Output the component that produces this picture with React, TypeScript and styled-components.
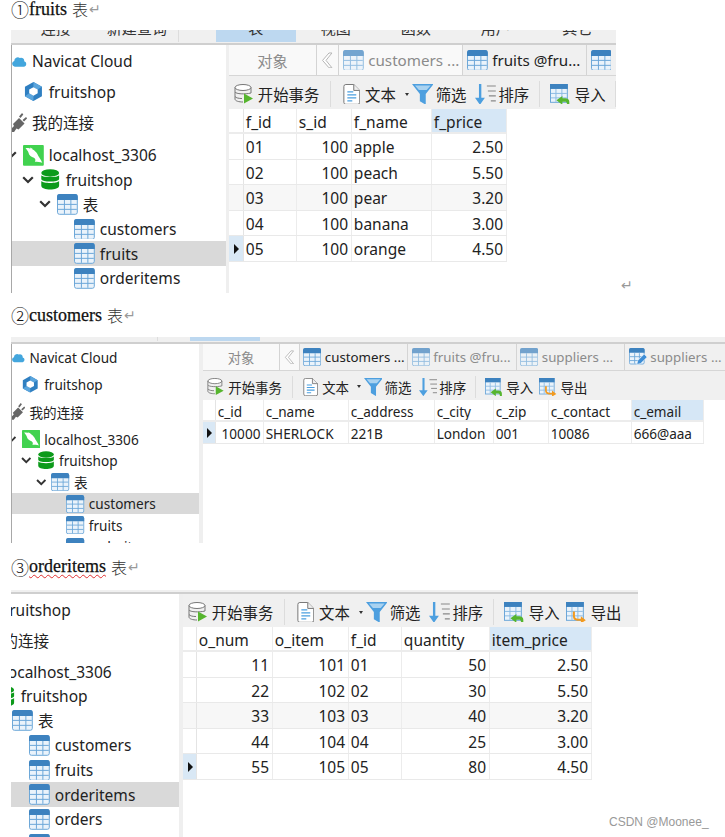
import React from 'react';
import styled, { createGlobalStyle } from 'styled-components';

const GlobalStyle = createGlobalStyle`
  html, body { margin: 0; padding: 0; background: #fff; }
  body { font-family: "Noto Sans", "Noto Sans CJK SC", sans-serif; color: #222; }
`;

const CJK = '"Noto Sans CJK SC", "Noto Sans", sans-serif';

const Page = styled.div`
  position: relative;
  width: 725px;
  height: 837px;
  overflow: hidden;
  padding-left: 11px;
  box-sizing: border-box;
`;

const Heading = styled.div<{ $h: number; $up?: number }>`
  height: ${p => p.$h}px;
  box-sizing: border-box;
  padding-bottom: ${p => p.$up ?? 0}px;
  display: flex;
  align-items: center;
  font-family: "Liberation Serif", serif;
  font-size: 18px;
  color: #111;
  -webkit-text-stroke: .25px #111;
`;
const Circled = styled.span`
  font-family: ${CJK};
  font-size: 18px;
  font-weight: 300;
  width: 18px;
  -webkit-text-stroke: 0;
`;
const HeadCjk = styled.span`
  font-family: ${CJK};
  font-weight: 300;
  font-size: 16px;
  color: #333;
  margin-left: 5px;
  -webkit-text-stroke: 0;
`;
const Squiggle = styled.span`
  text-decoration: underline wavy #e03030 1px;
  text-underline-offset: 2px;
`;
const ReturnMark = styled.span`
  font-family: "DejaVu Sans", sans-serif;
  font-size: 14px;
  color: #999;
  margin-left: 1px;
  -webkit-text-stroke: 0;
`;
const ShotRow = styled.div`
  display: flex;
  align-items: flex-end;
`;
const TrailingMark = styled(ReturnMark)`
  margin: 0 0 0 5px;
`;

const Shot = styled.section<{ $w: number; $h: number; $size: number }>`
  width: ${p => p.$w}px;
  height: ${p => p.$h}px;
  flex: none;
  font-size: ${p => p.$size}px;
  display: flex;
  flex-direction: column;
  overflow: hidden;
`;
const MenuStrip = styled.div<{ $h: number }>`
  height: ${p => p.$h}px;
  flex: none;
  display: flex;
  padding-left: .3em;
  background: #f0f0f0;
  border-bottom: 2px solid #cfcfcf;
  overflow: hidden;
`;
const MenuItem = styled.div<{ $w: number; $active?: boolean; $divide?: boolean }>`
  width: ${p => p.$w}em;
  flex: none;
  height: calc(100% - 1px);
  text-align: center;
  color: #333;
  font-family: ${CJK};
  font-size: 1em;
  background: ${p => (p.$active ? '#bdd8f0' : 'transparent')};
  box-sizing: border-box;
  ${p => p.$divide && 'border-right: 1px solid #ddd;'}
`;
const MenuLabel = styled.div`
  margin-top: -.85em;
  line-height: 1.5em;
  font-size: .94em;
`;
const Body = styled.div`
  flex: 1;
  min-height: 0;
  display: flex;
`;
const Sidebar = styled.aside<{ $w: number; $border?: boolean }>`
  width: ${p => p.$w}px;
  flex: none;
  background: #fff;
  overflow: hidden;
  ${p => p.$border && 'border-left: 1px solid #a8a8a8;'}
`;
const Gutter = styled.div<{ $w: number }>`
  width: ${p => p.$w}px;
  flex: none;
  background: #efefef;
`;
const TreeRow = styled.div<{ $tall?: boolean; $picked?: boolean; $above?: number }>`
  height: ${p => (p.$tall ? 1.94 : 1.54)}em;
  margin-top: ${p => p.$above ?? 0}em;
  display: flex;
  align-items: center;
  background: ${p => (p.$picked ? '#d9d9d9' : 'transparent')};
  overflow: hidden;
`;
const TreeInner = styled.div<{ $indent: number }>`
  margin-left: ${p => p.$indent}em;
  display: flex;
  align-items: center;
  flex: none;
`;
const IconSlot = styled.span<{ $narrow?: boolean }>`
  width: ${p => (p.$narrow ? 0.94 : 1.3)}em;
  flex: none;
  display: flex;
  justify-content: center;
`;
const TreeLabel = styled.span`
  margin-left: .32em;
  font-size: .97em;
  white-space: nowrap;
  color: #222;
`;
const Main = styled.main`
  flex: 1;
  min-width: 0;
  display: flex;
  flex-direction: column;
  background: #fff;
`;
const TabBar = styled.div`
  height: 1.94em;
  flex: none;
  display: flex;
  background: #f0f0f0;
  border-bottom: 1px solid #d6d6d6;
  box-sizing: border-box;
  overflow: hidden;
`;
const Tab = styled.div<{ $w: number; $tone: 'active' | 'pale' | 'flat' }>`
  width: ${p => p.$w}em;
  flex: none;
  display: flex;
  align-items: center;
  gap: .25em;
  padding-left: .25em;
  box-sizing: border-box;
  white-space: nowrap;
  overflow: hidden;
  font-size: 1em;
  color: ${p => (p.$tone === 'active' ? '#222' : '#8b8b8b')};
  background: ${p => (p.$tone === 'pale' ? '#f9f9f9' : '#f0f0f0')};
  border-right: 1px solid #d4d4d4;
`;
const TabText = styled.span`
  font-size: .95em;
`;
const ObjectTab = styled(Tab)`
  justify-content: center;
  padding-left: 0;
  font-family: ${CJK};
`;
const Toolbar = styled.div`
  height: 2.06em;
  flex: none;
  display: flex;
  align-items: center;
  box-sizing: border-box;
  padding: .2em 0 0 .3em;
  gap: .2em;
  background: #f0f0f0;
  white-space: nowrap;
  overflow: hidden;
`;
const Tool = styled.span<{ $gap?: number; $push?: number }>`
  display: inline-flex;
  align-items: center;
  gap: ${p => p.$gap ?? 0.25}em;
  margin-left: ${p => p.$push ?? 0}em;
  flex: none;
`;
const ToolLabel = styled.span`
  font-family: ${CJK};
  font-size: .96em;
  color: #222;
`;
const ToolSep = styled.span<{ $space: number }>`
  width: 1px;
  height: 1.6em;
  margin: 0 ${p => p.$space}em;
  background: #dcdcdc;
  flex: none;
`;
const Caret = styled.span`
  width: 0;
  height: 0;
  margin: 0 0 0 .25em;
  border-top: 3px solid #333;
  border-left: 2.5px solid transparent;
  border-right: 2.5px solid transparent;
`;
const Grid = styled.div`
  flex: none;
  align-self: flex-start;
`;
const GridRow = styled.div<{ $cols: string; $head?: boolean; $tint?: boolean }>`
  display: grid;
  grid-template-columns: ${p => p.$cols};
  height: ${p => (p.$head ? 1.56 : 1.6)}em;
  box-sizing: border-box;
  border-bottom: ${p => (p.$head ? '2px solid #ececec' : '1px solid #e9e9e9')};
  background: ${p => (p.$tint ? '#f7f7f7' : '#fff')};
`;
const Cell = styled.div<{ $right?: boolean; $lit?: boolean }>`
  padding: 1px .19em 0 .12em;
  font-size: .97em;
  line-height: 1.55em;
  white-space: nowrap;
  overflow: hidden;
  color: #222;
  text-align: ${p => (p.$right ? 'right' : 'left')};
  background: ${p => (p.$lit ? '#d6e7f6' : 'transparent')};
  border-right: 1px solid #ececec;
`;
const MarkerCell = styled.div<{ $current?: boolean }>`
  display: flex;
  align-items: center;
  padding-left: .3em;
  background: ${p => (p.$current ? '#d9e8f5' : 'transparent')};
  border-right: 1px solid #e4e4e4;
`;
const Marker = styled.span`
  width: 0;
  height: 0;
  border-left: 5px solid #111;
  border-top: 5px solid transparent;
  border-bottom: 5px solid transparent;
`;
const Watermark = styled.div`
  position: absolute;
  left: 609px;
  top: 815px;
  font-family: "Liberation Sans", sans-serif;
  font-size: 12px;
  color: #999;
`;

const Svg = styled.svg<{ $w: number; $h?: number }>`
  width: ${p => p.$w}em;
  height: ${p => p.$h ?? p.$w}em;
  flex: none;
  display: block;
`;
const ChevronSvg = styled(Svg)`
  margin-right: .38em;
`;

const TableIcon = ({ faded }: { faded?: boolean }) => (
  <Svg $w={1.3} viewBox="0 0 21 21" style={faded ? { opacity: 0.7 } : undefined}>
    <rect x=".5" y=".5" width="20" height="20" rx="2" fill="#eaf3fb" stroke="#6ba6d8" />
    <path d="M2.5 0h16A2.5 2.5 0 0 1 21 2.5V6H0V2.5A2.5 2.5 0 0 1 2.5 0z" fill="#3d82bf" />
    <path d="M7.5 6v14M14 6v14M1 10.5h19M1 15.5h19" stroke="#6ba6d8" fill="none" />
  </Svg>
);
const EditTableIcon = () => (
  <Svg $w={1.3} viewBox="0 0 21 21">
    <rect x=".5" y=".5" width="17" height="18" rx="1.5" fill="#eaf3fb" stroke="#6ba6d8" />
    <path d="M2 0h14a2 2 0 0 1 2 2v3.500H0V2a2 2 0 0 1 2-2z" fill="#3d82bf" />
    <path d="M6.500 6v12M12 6v12M1 10h16M1 14.500h16" stroke="#6ba6d8" fill="none" />
    <path d="M9 19l1-4.500 7.500-7.500 3.500 3.500-7.500 7.500z" fill="#3f8ed6" stroke="#fff" strokeWidth=".7" />
  </Svg>
);
const DbIcon = () => (
  <Svg $w={1.15} $h={1.3} viewBox="0 0 18 21">
    <ellipse cx="9" cy="4" rx="9" ry="3.800" fill="#0c9a1a" />
    <path d="M0 6.300C2 8.800 16 8.800 18 6.300V10C18 13.500 0 13.500 0 10z" fill="#0c9a1a" />
    <path d="M0 12.200C2 14.800 16 14.800 18 12.200V17C18 22 0 22 0 17z" fill="#0c9a1a" />
  </Svg>
);
const CloudIcon = () => (
  <Svg $w={.94} $h={.75} viewBox="0 0 16 12">
    <path d="M3 12A3 3 0 0 1 2.400 6.100 3.800 3.800 0 0 1 8.300 2.800 3.300 3.300 0 0 1 13 6.200 3 3 0 0 1 13 12z" fill="#43a6dd" />
  </Svg>
);
const HexIcon = () => (
  <Svg $w={1.18} viewBox="0 0 20 20">
    <path d="M10 0l9 5v10l-9 5-9-5V5z" fill="#2f7fc1" />
    <path d="M10 0l9 5-4.500 3L10 5.500z" fill="#5aa5dd" />
    <path d="M1 15l4.500-3L10 14.500V20z" fill="#5aa5dd" />
    <path d="M10 5.500l4.500 2.500v4L10 14.500 5.500 12V8z" fill="#fff" />
  </Svg>
);
const PlugIcon = () => (
  <Svg $w={.94} $h={1.2} viewBox="0 0 15 19">
    <path d="M0 19v-4l2-2-1-2 6-6 5.500 5.500-6 6-2-1-2.500 3.500z" fill="#666" />
    <path d="M7 3.500L10 0l1.300 1.300L8.500 5zM10.500 7L14 4l1 1.300-3 3.200z" fill="#666" />
  </Svg>
);
const MysqlIcon = () => (
  <Svg $w={1.3} viewBox="0 0 21 21">
    <rect width="21" height="21" rx="1" fill="#41d24f" />
    <path d="M2.500 3C7 2.500 12 4.500 14.500 9c1 2.500 3.500 5 5 9-2.500-1.200-4.500-.5-7.500-1 1-1.500.5-3-1-4-2.500-1-5-2.500-5.500-5.500C5 6 3.500 4.500 2.500 3z" fill="#fff" />
    <path d="M8 5l-1-2.500L10 4z" fill="#fff" />
  </Svg>
);
const Chevron = () => (
  <ChevronSvg $w={.75} $h={.5} viewBox="0 0 12 8">
    <path d="M1.200 1.200L6 6l4.800-4.800" fill="none" stroke="#333" strokeWidth="2.200" />
  </ChevronSvg>
);
const GreyDbIcon = () => (
  <Svg $w={1.25} $h={1.25} viewBox="0 0 20 20">
    <ellipse cx="9" cy="3.500" rx="8" ry="3" fill="#fff" stroke="#777" />
    <path d="M1 3.500V15c0 2 4 3 8 3M17 3.500V9M1 8c1 2 10 2.500 16 1M1 12.500c1 1.500 4 2 7 2" fill="none" stroke="#777" />
    <path d="M10 9.500l9 5-9 5z" fill="#56b52e" />
  </Svg>
);
const DocIcon = () => (
  <Svg $w={1.1} $h={1.3} viewBox="0 0 17 21">
    <path d="M.5 2.500a2 2 0 0 1 2-2h8l6 6v12a2 2 0 0 1-2 2h-12a2 2 0 0 1-2-2z" fill="#fff" stroke="#777" />
    <path d="M10.500.5v6h6" fill="#eee" stroke="#777" />
    <path d="M4 8h6M4 11h9M4 14h9M4 17h5" stroke="#4a9fe0" strokeWidth="1.200" />
  </Svg>
);
const FunnelIcon = () => (
  <Svg $w={1.35} $h={1.3} viewBox="0 0 22 21">
    <path d="M0 0h22l-8 10v11l-6-3.500V10z" fill="#4d9fdf" />
    <path d="M3 1.500h16L15 6H7z" fill="#a9d2f0" />
  </Svg>
);
const SortIcon = () => (
  <Svg $w={1.3} viewBox="0 0 21 21">
    <path d="M4 0h2.400v14H10l-5 7-5-7h4z" fill="#4d9fdf" />
    <path d="M12 2h9M13 7h8M14 12h7M16 17h5" stroke="#888" strokeWidth="1.100" />
  </Svg>
);
const TransferIcon = ({ out }: { out?: boolean }) => (
  <Svg $w={1.3} viewBox="0 0 21 21">
    <rect x=".5" y=".5" width="17" height="18" fill="#eaf3fb" stroke="#6ba6d8" />
    <rect width="18" height="5" fill="#3d82bf" />
    <path d="M6 5v13M12 5v13M1 9.500h16M1 14h16" stroke="#8dbbe3" fill="none" />
    {out ? (
      <path d="M9 9.500v5c0 1.500 1 2.500 3 2.500h3v-2.500l5 4-5 3V19h-3.500C8.500 19 7 17 7 14.500v-5z" fill="#f29a1f" />
    ) : (
      <path d="M19.500 21v-3c0-2-1.500-3.500-4-3.500h-3V12l-6 4.500 6 4.500v-3h3c1 0 1.700.8 1.700 3z" fill="#56b52e" />
    )}
  </Svg>
);
const FoldIcon = () => (
  <Svg $w={.75} $h={1.05} viewBox="0 0 12 17">
    <path d="M8 1L1.500 8.500 8 16h3L5 8.500 11 1z" fill="#fff" stroke="#b5b5b5" />
  </Svg>
);

const MENU = [
  { w: 5, text: '连接' },
  { w: 5.2, text: '新建查询', divide: true },
  { w: 2.3, text: '' },
  { w: 5, text: '表', active: true },
  { w: 5, text: '视图' },
  { w: 5, text: '函数' },
  { w: 5, text: '用户' },
  { w: 5.2, text: '其它' },
];

const Menu = ({ h, labels }: { h: number; labels: boolean }) => (
  <MenuStrip $h={h}>
    {MENU.map((m, i) => (
      <MenuItem key={i} $w={m.w} $active={m.active} $divide={m.divide}>
        {labels && <MenuLabel>{m.text}</MenuLabel>}
      </MenuItem>
    ))}
  </MenuStrip>
);

type NodeKind = 'cloud' | 'hex' | 'plug' | 'mysql' | 'db' | 'group' | 'table';
type Node = { kind: NodeKind; label: string; picked?: boolean };

const NODE_SETUP: Record<NodeKind, { indent: number; tall?: boolean; chevron?: boolean; narrow?: boolean; icon: React.ReactNode }> = {
  cloud: { indent: 0, tall: true, narrow: true, icon: <CloudIcon /> },
  hex: { indent: 0.69, tall: true, icon: <HexIcon /> },
  plug: { indent: 0, tall: true, narrow: true, icon: <PlugIcon /> },
  mysql: { indent: -0.44, chevron: true, icon: <MysqlIcon /> },
  db: { indent: 0.62, chevron: true, icon: <DbIcon /> },
  group: { indent: 1.69, chevron: true, icon: <TableIcon /> },
  table: { indent: 3.88, icon: <TableIcon /> },
};

const Tree = ({ nodes, shift = 0, gap = 0.2 }: { nodes: Node[]; shift?: number; gap?: number }) => (
  <>
    {nodes.map(n => {
      const setup = NODE_SETUP[n.kind];
      return (
        <TreeRow key={n.kind + n.label} $tall={setup.tall} $above={n.kind === 'mysql' ? gap : 0} $picked={n.picked}>
          <TreeInner $indent={setup.indent + shift}>
            {setup.chevron && <Chevron />}
            <IconSlot $narrow={setup.narrow}>{setup.icon}</IconSlot>
            <TreeLabel>{n.label}</TreeLabel>
          </TreeInner>
        </TreeRow>
      );
    })}
  </>
);

const Tools = ({ exporting }: { exporting?: boolean }) => (
  <Toolbar>
    <Tool>
      <GreyDbIcon />
      <ToolLabel>开始事务</ToolLabel>
    </Tool>
    <ToolSep $space={0.5} />
    <Tool $gap={0.3}>
      <DocIcon />
      <ToolLabel>文本</ToolLabel>
      <Caret />
    </Tool>
    <Tool $gap={0.15}>
      <FunnelIcon />
      <ToolLabel>筛选</ToolLabel>
    </Tool>
    <Tool $gap={0.15} $push={0.35}>
      <SortIcon />
      <ToolLabel>排序</ToolLabel>
    </Tool>
    <ToolSep $space={0.42} />
    <Tool>
      <TransferIcon />
      <ToolLabel>导入</ToolLabel>
    </Tool>
    {exporting ? (
      <Tool $push={0.2}>
        <TransferIcon out />
        <ToolLabel>导出</ToolLabel>
      </Tool>
    ) : (
      <ToolSep $space={0.42} />
    )}
  </Toolbar>
);

type Column = { name: string; w: number; right?: boolean };

const DataGrid = ({ gutter, columns, rows, tint }: { gutter: number; columns: Column[]; rows: string[][]; tint?: number }) => {
  const template = [gutter, ...columns.map(c => c.w)].map(w => `${w}px`).join(' ');
  return (
    <Grid>
      <GridRow $cols={template} $head>
        <MarkerCell />
        {columns.map((c, i) => (
          <Cell key={c.name} $lit={i === columns.length - 1}>{c.name}</Cell>
        ))}
      </GridRow>
      {rows.map((row, r) => {
        const current = r === rows.length - 1;
        return (
          <GridRow key={r} $cols={template} $tint={r === tint}>
            <MarkerCell $current={current}>{current && <Marker />}</MarkerCell>
            {row.map((v, i) => (
              <Cell key={i} $right={columns[i].right}>{v}</Cell>
            ))}
          </GridRow>
        );
      })}
    </Grid>
  );
};

const FRUIT_TREE: Node[] = [
  { kind: 'cloud', label: 'Navicat Cloud' },
  { kind: 'hex', label: 'fruitshop' },
  { kind: 'plug', label: '我的连接' },
  { kind: 'mysql', label: 'localhost_3306' },
  { kind: 'db', label: 'fruitshop' },
  { kind: 'group', label: '表' },
  { kind: 'table', label: 'customers' },
  { kind: 'table', label: 'fruits', picked: true },
  { kind: 'table', label: 'orderitems' },
];
const CUSTOMER_TREE: Node[] = FRUIT_TREE.map(n =>
  n.kind === 'table' ? { ...n, picked: n.label === 'customers' } : n,
);
const ORDER_TREE: Node[] = [
  { kind: 'hex', label: 'fruitshop' },
  { kind: 'plug', label: '我的连接' },
  { kind: 'mysql', label: 'localhost_3306' },
  { kind: 'db', label: 'fruitshop' },
  { kind: 'group', label: '表' },
  { kind: 'table', label: 'customers' },
  { kind: 'table', label: 'fruits' },
  { kind: 'table', label: 'orderitems', picked: true },
  { kind: 'table', label: 'orders' },
  { kind: 'table', label: 'products' },
];

const FRUIT_COLUMNS: Column[] = [
  { name: 'f_id', w: 53 },
  { name: 's_id', w: 55, right: true },
  { name: 'f_name', w: 80 },
  { name: 'f_price', w: 75, right: true },
];
const FRUIT_ROWS = [
  ['01', '100', 'apple', '2.50'],
  ['02', '100', 'peach', '5.50'],
  ['03', '100', 'pear', '3.20'],
  ['04', '100', 'banana', '3.00'],
  ['05', '100', 'orange', '4.50'],
];
const CUSTOMER_COLUMNS: Column[] = [
  { name: 'c_id', w: 48, right: true },
  { name: 'c_name', w: 85 },
  { name: 'c_address', w: 86 },
  { name: 'c_city', w: 59 },
  { name: 'c_zip', w: 55 },
  { name: 'c_contact', w: 83 },
  { name: 'c_email', w: 72 },
];
const CUSTOMER_ROWS = [['10000', 'SHERLOCK', '221B', 'London', '001', '10086', '666@aaa']];
const ORDER_COLUMNS: Column[] = [
  { name: 'o_num', w: 76, right: true },
  { name: 'o_item', w: 76, right: true },
  { name: 'f_id', w: 53 },
  { name: 'quantity', w: 88, right: true },
  { name: 'item_price', w: 102, right: true },
];
const ORDER_ROWS = [
  ['11', '101', '01', '50', '2.50'],
  ['22', '102', '02', '30', '5.50'],
  ['33', '103', '03', '40', '3.20'],
  ['44', '104', '04', '25', '3.00'],
  ['55', '105', '05', '80', '4.50'],
];

export default function App() {
  return (
    <Page>
      <GlobalStyle />
      <Heading $h={30} $up={12}>
        <Circled>①</Circled>fruits<HeadCjk>表</HeadCjk><ReturnMark>↵</ReturnMark>
      </Heading>
      <ShotRow>
        <Shot $w={605} $h={263} $size={16}>
          <Menu h={13} labels />
          <Body>
            <Sidebar $w={214} $border><Tree nodes={FRUIT_TREE} gap={0.3} /></Sidebar>
            <Gutter $w={3} />
            <Main>
              <TabBar>
                <ObjectTab $w={5.5} $tone="pale"><TabText>对象</TabText></ObjectTab>
                <Tab $w={1.4} $tone="pale"><FoldIcon /></Tab>
                <Tab $w={7.75} $tone="pale"><TableIcon faded /><TabText>customers ...</TabText></Tab>
                <Tab $w={7.7} $tone="active"><TableIcon /><TabText>fruits @fru...</TabText></Tab>
                <Tab $w={3} $tone="flat"><TableIcon /></Tab>
              </TabBar>
              <Tools />
              <DataGrid gutter={15} columns={FRUIT_COLUMNS} rows={FRUIT_ROWS} tint={2} />
            </Main>
          </Body>
        </Shot>
        <TrailingMark>↵</TrailingMark>
      </ShotRow>
      <Heading $h={44}>
        <Circled>②</Circled>customers<HeadCjk>表</HeadCjk><ReturnMark>↵</ReturnMark>
      </Heading>
      <Shot $w={714} $h={206} $size={14}>
        <Menu h={5} labels={false} />
        <Body>
          <Sidebar $w={187} $border><Tree nodes={CUSTOMER_TREE} /></Sidebar>
          <Gutter $w={4} />
          <Main>
            <TabBar>
              <ObjectTab $w={5.5} $tone="pale"><TabText>对象</TabText></ObjectTab>
              <Tab $w={1.4} $tone="pale"><FoldIcon /></Tab>
              <Tab $w={7.75} $tone="active"><TableIcon /><TabText>customers ...</TabText></Tab>
              <Tab $w={7.75} $tone="flat"><TableIcon faded /><TabText>fruits @fru...</TabText></Tab>
              <Tab $w={7.75} $tone="flat"><TableIcon faded /><TabText>suppliers ...</TabText></Tab>
              <Tab $w={7.2} $tone="flat"><EditTableIcon /><TabText>suppliers ...</TabText></Tab>
            </TabBar>
            <Tools exporting />
            <DataGrid gutter={13} columns={CUSTOMER_COLUMNS} rows={CUSTOMER_ROWS} />
          </Main>
        </Body>
      </Shot>
      <Heading $h={47}>
        <Circled>③</Circled><Squiggle>orderitems</Squiggle><HeadCjk>表</HeadCjk><ReturnMark>↵</ReturnMark>
      </Heading>
      <Shot $w={627} $h={247} $size={16}>
        <MenuStrip $h={2} />
        <Body>
          <Sidebar $w={168}><Tree nodes={ORDER_TREE} shift={-2.75} /></Sidebar>
          <Gutter $w={4} />
          <Main>
            <Tools exporting />
            <DataGrid gutter={14} columns={ORDER_COLUMNS} rows={ORDER_ROWS} tint={2} />
          </Main>
        </Body>
      </Shot>
      <Watermark>CSDN @Moonee_</Watermark>
    </Page>
  );
}
